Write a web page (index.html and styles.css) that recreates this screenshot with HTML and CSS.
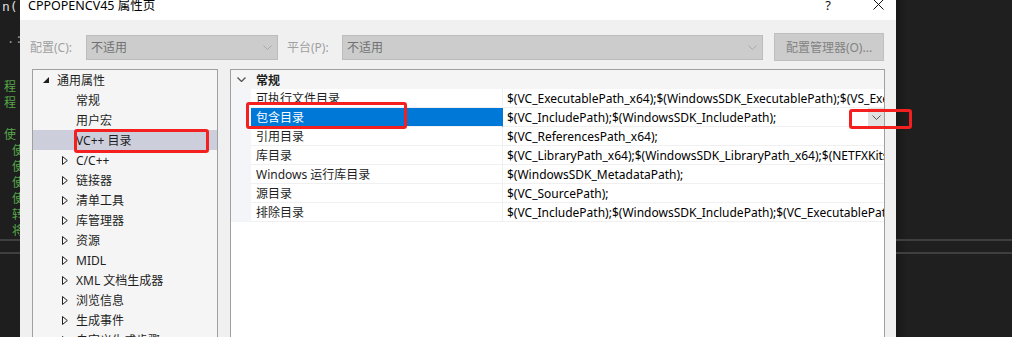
FILE: index.html
```html
<!DOCTYPE html>
<html lang="zh-CN">
<head>
    <meta charset="UTF-8">
    <meta name="viewport" content="width=device-width, initial-scale=1.0">
    <title>CPPOPENCV45 属性页</title>
    <link rel="stylesheet" href="styles.css">
</head>
<body>
    <div class="screen">
        <!-- editor behind the dialog, left edge -->
        <div class="editor editor-left">
            <div class="code">
                <div class="ln plain">n(</div>
                <div class="ln"></div>
                <div class="ln dots">.::</div>
                <div class="ln"></div>
                <div class="ln"></div>
                <div class="ln">程</div>
                <div class="ln">程</div>
                <div class="ln"></div>
                <div class="ln">使</div>
                <div class="ln indent">使</div>
                <div class="ln indent">使</div>
                <div class="ln indent">使</div>
                <div class="ln indent">使</div>
                <div class="ln indent">转</div>
                <div class="ln indent">将</div>
            </div>
            <div class="rule"></div>
            <div class="rule"></div>
        </div>

        <div class="dialog">
            <div class="titlebar">
                <span class="title">CPPOPENCV45 属性页</span>
                <span class="tb-btn help">?</span>
                <span class="tb-btn close">
                    <svg width="11" height="11" viewBox="0 0 11 11"><path d="M0.5 0.5L10.5 10.5M10.5 0.5L0.5 10.5" stroke="#111" stroke-width="1" fill="none"/></svg>
                </span>
            </div>

            <div class="config-row">
                <span class="cfg-label">配置(C):</span>
                <div class="combo combo-config">
                    <span>不适用</span>
                    <svg class="combo-arrow" width="9" height="5" viewBox="0 0 9 5"><path d="M0.5 0.5L4.5 4.5L8.5 0.5" stroke="#a9a9a9" fill="none"/></svg>
                </div>
                <span class="cfg-label platform">平台(P):</span>
                <div class="combo combo-platform">
                    <span>不适用</span>
                    <svg class="combo-arrow" width="9" height="5" viewBox="0 0 9 5"><path d="M0.5 0.5L4.5 4.5L8.5 0.5" stroke="#a9a9a9" fill="none"/></svg>
                </div>
                <button class="cfg-btn">配置管理器(O)...</button>
            </div>

            <div class="panels">
                <div class="tree">
                    <div class="node">
                        <span class="twisty"><svg width="6" height="6" viewBox="0 0 6 6"><polygon points="6,0 6,6 0,6" fill="#1e1e1e"/></svg></span>
                        <span class="node-label">通用属性</span>
                    </div>
                    <div class="node child"><span class="twisty"></span><span class="node-label">常规</span></div>
                    <div class="node child"><span class="twisty"></span><span class="node-label">用户宏</span></div>
                    <div class="node child selected"><span class="twisty"></span><span class="node-label">VC++ 目录</span></div>
                    <div class="node child"><span class="twisty"><svg class="tri" width="6" height="9" viewBox="0 0 6 9"><polygon points="0.5,0.5 5.3,4.5 0.5,8.5"/></svg></span><span class="node-label">C/C++</span></div>
                    <div class="node child"><span class="twisty"><svg class="tri" width="6" height="9" viewBox="0 0 6 9"><polygon points="0.5,0.5 5.3,4.5 0.5,8.5"/></svg></span><span class="node-label">链接器</span></div>
                    <div class="node child"><span class="twisty"><svg class="tri" width="6" height="9" viewBox="0 0 6 9"><polygon points="0.5,0.5 5.3,4.5 0.5,8.5"/></svg></span><span class="node-label">清单工具</span></div>
                    <div class="node child"><span class="twisty"><svg class="tri" width="6" height="9" viewBox="0 0 6 9"><polygon points="0.5,0.5 5.3,4.5 0.5,8.5"/></svg></span><span class="node-label">库管理器</span></div>
                    <div class="node child"><span class="twisty"><svg class="tri" width="6" height="9" viewBox="0 0 6 9"><polygon points="0.5,0.5 5.3,4.5 0.5,8.5"/></svg></span><span class="node-label">资源</span></div>
                    <div class="node child"><span class="twisty"><svg class="tri" width="6" height="9" viewBox="0 0 6 9"><polygon points="0.5,0.5 5.3,4.5 0.5,8.5"/></svg></span><span class="node-label">MIDL</span></div>
                    <div class="node child"><span class="twisty"><svg class="tri" width="6" height="9" viewBox="0 0 6 9"><polygon points="0.5,0.5 5.3,4.5 0.5,8.5"/></svg></span><span class="node-label">XML 文档生成器</span></div>
                    <div class="node child"><span class="twisty"><svg class="tri" width="6" height="9" viewBox="0 0 6 9"><polygon points="0.5,0.5 5.3,4.5 0.5,8.5"/></svg></span><span class="node-label">浏览信息</span></div>
                    <div class="node child"><span class="twisty"><svg class="tri" width="6" height="9" viewBox="0 0 6 9"><polygon points="0.5,0.5 5.3,4.5 0.5,8.5"/></svg></span><span class="node-label">生成事件</span></div>
                    <div class="node child"><span class="twisty"><svg class="tri" width="6" height="9" viewBox="0 0 6 9"><polygon points="0.5,0.5 5.3,4.5 0.5,8.5"/></svg></span><span class="node-label">自定义生成步骤</span></div>
                </div>

                <div class="grid">
                    <div class="grid-head">
                        <span class="gutter">
                            <svg width="9" height="5" viewBox="0 0 9 5"><path d="M0.5 0.5L4.5 4.5L8.5 0.5" stroke="#555" stroke-width="1.3" fill="none"/></svg>
                        </span>
                        <span class="head-label">常规</span>
                    </div>
                    <div class="prop">
                        <span class="gutter"></span>
                        <span class="prop-name">可执行文件目录</span>
                        <span class="prop-value">$(VC_ExecutablePath_x64);$(WindowsSDK_ExecutablePath);$(VS_ExecutablePath);$(MSBuild_ExecutablePath);$(FxCopDir);$(PATH);</span>
                    </div>
                    <div class="prop active">
                        <span class="gutter"></span>
                        <span class="prop-name">包含目录</span>
                        <span class="prop-value">$(VC_IncludePath);$(WindowsSDK_IncludePath);</span>
                        <span class="drop-btn">
                            <svg width="9" height="5" viewBox="0 0 9 5"><path d="M0.5 0.5L4.5 4.5L8.5 0.5" stroke="#555" fill="none"/></svg>
                        </span>
                    </div>
                    <div class="prop">
                        <span class="gutter"></span>
                        <span class="prop-name">引用目录</span>
                        <span class="prop-value">$(VC_ReferencesPath_x64);</span>
                    </div>
                    <div class="prop">
                        <span class="gutter"></span>
                        <span class="prop-name">库目录</span>
                        <span class="prop-value">$(VC_LibraryPath_x64);$(WindowsSDK_LibraryPath_x64);$(NETFXKitsDir)Lib\um\x64</span>
                    </div>
                    <div class="prop">
                        <span class="gutter"></span>
                        <span class="prop-name">Windows 运行库目录</span>
                        <span class="prop-value">$(WindowsSDK_MetadataPath);</span>
                    </div>
                    <div class="prop">
                        <span class="gutter"></span>
                        <span class="prop-name">源目录</span>
                        <span class="prop-value">$(VC_SourcePath);</span>
                    </div>
                    <div class="prop">
                        <span class="gutter"></span>
                        <span class="prop-name">排除目录</span>
                        <span class="prop-value">$(VC_IncludePath);$(WindowsSDK_IncludePath);$(VC_ExecutablePath_x64);$(VC_LibraryPath_x64);</span>
                    </div>
                </div>
            </div>
        </div>

        <!-- editor behind the dialog, right edge -->
        <div class="editor editor-right">
            <div class="rule"></div>
            <div class="rule"></div>
        </div>

        <!-- red annotation boxes drawn over the screenshot -->
        <div class="mark mark-tree"></div>
        <div class="mark mark-name"></div>
        <div class="mark mark-drop"></div>
    </div>
</body>
</html>
```

FILE: styles.css
```css
* {
    box-sizing: border-box;
}
body {
    margin: 0;
    background: #1e1e1e;
    font-family: "Noto Sans", "Noto Sans CJK SC", sans-serif;
    font-size: 12px;
    color: #1e1e1e;
    overflow: hidden;
}
.screen {
    position: relative;
    display: flex;
    width: 1012px;
    height: 337px;
    overflow: hidden;
}

/* editor strips */
.editor {
    background: #1e1e1e;
    display: flex;
    flex-direction: column;
}
.editor-left {
    width: 20px;
    overflow: hidden;
}
.code {
    height: 240px;
    margin-top: -1px;
    padding-left: 4px;
    font-family: "DejaVu Sans Mono", "Noto Sans CJK SC", monospace;
    font-size: 12px;
    line-height: 16px;
}
.ln {
    height: 16px;
    white-space: nowrap;
    color: #57a64a;
}
.ln.plain {
    margin-left: -2px;
    font-size: 13px;
    color: #dcdcdc;
}
.ln.dots {
    padding-left: 3px;
    color: #9b9b9b;
    letter-spacing: 1px;
}
.ln.indent {
    padding-left: 8px;
}
.rule {
    height: 2px;
    background: #3f3f3f;
}
.rule + .rule {
    margin-top: 11px;
}
.editor-right {
    flex: 1;
    padding-top: 239px;
    background: linear-gradient(to right, #171717, #1f1f1f 10px);
}

/* dialog */
.dialog {
    width: 876px;
    background: #f0f0f0;
    display: flex;
    flex-direction: column;
    overflow: hidden;
}
.titlebar {
    height: 31px;
    margin-top: -11px;
    padding: 0 8px;
    background: #fff;
    display: flex;
    align-items: center;
    flex-shrink: 0;
}
.title {
    font-size: 12.5px;
    color: #000;
}
.tb-btn {
    display: flex;
    justify-content: center;
    width: 20px;
    color: #111;
}
.help {
    margin-left: auto;
    font-size: 13px;
    margin-right: 30px;
}

.config-row {
    display: flex;
    align-items: center;
    height: 28px;
    margin-top: 13px;
    padding-left: 10px;
    flex-shrink: 0;
}
.cfg-label {
    width: 56px;
    color: #a0a0a0;
}
.cfg-label.platform {
    width: 55px;
    margin-left: 9px;
}
.combo {
    display: flex;
    align-items: center;
    height: 25px;
    padding: 0 5px 0 4px;
    background: #cccccc;
    border: 1px solid #bcbcbc;
    color: #707070;
}
.combo-arrow {
    margin-left: auto;
}
.combo-config {
    width: 192px;
}
.combo-platform {
    width: 421px;
}
.cfg-btn {
    width: 110px;
    height: 28px;
    margin-left: 11px;
    padding: 0;
    background: #cccccc;
    border: 1px solid #bfbfbf;
    font-family: inherit;
    font-size: 12px;
    color: #838383;
}

.panels {
    flex: 1;
    display: flex;
    gap: 12px;
    margin-top: 8px;
    padding: 0 11px 0 12px;
}

/* tree */
.tree {
    width: 186px;
    background: #f5f5f5;
    border: 1px solid #a0a0a0;
    border-bottom: none;
}
.node {
    display: flex;
    align-items: center;
    height: 20px;
    padding-left: 6px;
    white-space: nowrap;
}
.node.child {
    padding-left: 25px;
}
.node.selected {
    background: #cccedb;
}
.twisty {
    display: flex;
    align-items: center;
    justify-content: center;
    width: 14px;
    height: 20px;
}
.tri polygon {
    fill: none;
    stroke: #1e1e1e;
    stroke-width: 1;
}
.node-label {
    margin-left: 4px;
}

/* property grid */
.grid {
    flex: 1;
    background: #fff;
    border: 1px solid #a0a0a0;
    border-bottom: none;
    overflow: hidden;
}
.grid-head {
    display: flex;
    align-items: center;
    height: 19px;
    background: #f5f5f5;
}
.gutter {
    display: flex;
    align-items: center;
    justify-content: center;
    width: 20px;
    height: 100%;
    flex-shrink: 0;
    background: #f3f5f8;
}
.grid-head .gutter {
    background: transparent;
}
.head-label {
    padding-left: 5px;
    font-weight: bold;
}
.prop {
    display: flex;
    height: 19px;
    line-height: 18px;
    white-space: nowrap;
}
.prop-name,
.prop-value {
    padding-top: 1px;
    line-height: 17px;
}
.prop-name {
    width: 252px;
    flex-shrink: 0;
    padding-left: 5px;
    border-bottom: 1px solid #f0f0f0;
    border-right: 1px solid #f0f0f0;
}
.prop-value {
    flex: 1;
    overflow: hidden;
    padding-left: 4px;
    border-bottom: 1px solid #f0f0f0;
    color: #000;
}
.prop.active .prop-name {
    background: #0078d7;
    color: #fff;
    border-right-color: #0078d7;
}
.drop-btn {
    display: flex;
    align-items: center;
    justify-content: center;
    width: 16px;
    flex-shrink: 0;
    background: #e1e1e1;
    border-bottom: 1px solid #f0f0f0;
}

/* annotation boxes */
.mark {
    position: absolute;
    border: 3px solid #f41f1f;
    border-radius: 3px;
}
.mark-tree {
    left: 74px;
    top: 129px;
    width: 135px;
    height: 24px;
}
.mark-name {
    left: 246px;
    top: 102px;
    width: 161px;
    height: 27px;
}
.mark-drop {
    left: 849px;
    top: 109px;
    width: 63px;
    height: 20px;
}
```
